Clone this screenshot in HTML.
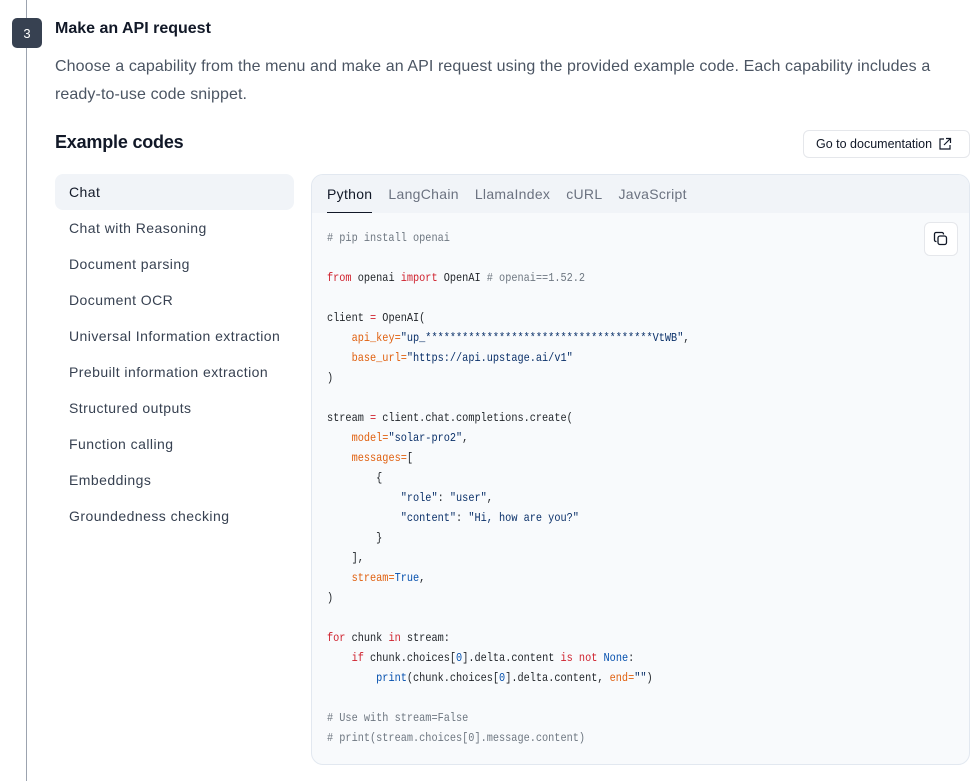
<!DOCTYPE html>
<html><head><meta charset="utf-8"><style>
*{box-sizing:border-box;margin:0;padding:0}
body{width:977px;height:781px;background:#fff;font-family:"Liberation Sans",sans-serif;position:relative;overflow:hidden;color:#111827}
.vl{position:absolute;left:26px;top:0;width:1px;height:781px;background:#9ca3af}
.badge{position:absolute;left:12px;top:18px;width:30px;height:30px;background:#374151;border-radius:5px;color:#fff;font-size:13px;display:flex;align-items:center;justify-content:center}
.t{position:absolute;left:55px;top:19px;font-size:16px;font-weight:bold;color:#111827;line-height:20px}
.p{position:absolute;left:55px;top:53px;width:910px;font-size:16px;line-height:28px;color:#4b5563;letter-spacing:0.1px}
.h{position:absolute;left:55px;top:131px;font-size:18px;font-weight:bold;color:#111827;line-height:22px;letter-spacing:-0.2px}
.btn{position:absolute;left:803px;top:130px;width:167px;height:28px;border:1px solid #e5e7eb;border-radius:6px;font-size:12.5px;color:#111827;display:flex;align-items:center;padding-left:12px;gap:6px}
.menu{position:absolute;left:55px;top:174px;width:239px}
.menu div{height:36px;line-height:36px;padding-left:14px;font-size:14px;color:#374151;letter-spacing:0.45px}
.menu div.a{background:#f1f4f8;border-radius:8px;color:#111827}
.card{position:absolute;left:311px;top:174px;width:659px;height:591px;border:1px solid #e2e8f0;border-radius:12px;background:#f8fafc;overflow:hidden}
.tabs{height:38px;background:#f1f4f8;display:flex;padding-left:15px;gap:16px;font-size:14px;color:#6b7280;letter-spacing:0.3px}
.tabs span{line-height:38px;height:38px}
.tabs span.a{color:#111827;border-bottom:1.5px solid #111827}
.copy{position:absolute;right:11px;top:47px;width:34px;height:34px;border:1px solid #e5e7eb;border-radius:6px;background:#fff;display:flex;align-items:center;justify-content:center}
pre{position:absolute;left:15px;top:53px;font-family:"Liberation Mono",monospace;font-size:12.2px;line-height:20px;color:#1f2328;transform:scaleX(0.84);transform-origin:0 0}
.c{color:#6e7781}.k{color:#cf222e}.o{color:#e0600f}.s{color:#0a3069}.b{color:#0550ae}
</style></head><body>
<div class="vl"></div>
<div class="badge">3</div>
<div class="t">Make an API request</div>
<div class="p">Choose a capability from the menu and make an API request using the provided example code. Each capability includes a ready-to-use code snippet.</div>
<div class="h">Example codes</div>
<div class="btn">Go to documentation <svg width="14" height="14" viewBox="0 0 14 14" fill="none" stroke="#111827" stroke-width="1.2"><path d="M6 2H2v10h10V8"/><path d="M8 1.5h4.5V6M12.5 1.5L6 8"/></svg></div>
<div class="menu">
<div class="a">Chat</div><div>Chat with Reasoning</div><div>Document parsing</div><div>Document OCR</div><div>Universal Information extraction</div><div>Prebuilt information extraction</div><div>Structured outputs</div><div>Function calling</div><div>Embeddings</div><div>Groundedness checking</div>
</div>
<div class="card">
<div class="tabs"><span class="a">Python</span><span>LangChain</span><span>LlamaIndex</span><span>cURL</span><span>JavaScript</span></div>
<div class="copy"><svg width="16" height="16" viewBox="0 0 16 16" fill="none" stroke="#111827" stroke-width="1.3"><rect x="5" y="5" width="8.5" height="8.5" rx="2"/><path d="M10.5 3.5V3a1.5 1.5 0 0 0-1.5-1.5H3A1.5 1.5 0 0 0 1.5 3v6A1.5 1.5 0 0 0 3 10.5h.5"/></svg></div>
<pre><span class="c"># pip install openai</span>

<span class="k">from</span> openai <span class="k">import</span> OpenAI <span class="c"># openai==1.52.2</span>

client <span class="k">=</span> OpenAI(
    <span class="o">api_key=</span><span class="s">"up_*************************************VtWB"</span>,
    <span class="o">base_url=</span><span class="s">"https://api.upstage.ai/v1"</span>
)

stream <span class="k">=</span> client.chat.completions.create(
    <span class="o">model=</span><span class="s">"solar-pro2"</span>,
    <span class="o">messages=</span>[
        {
            <span class="s">"role"</span>: <span class="s">"user"</span>,
            <span class="s">"content"</span>: <span class="s">"Hi, how are you?"</span>
        }
    ],
    <span class="o">stream=</span><span class="b">True</span>,
)

<span class="k">for</span> chunk <span class="k">in</span> stream:
    <span class="k">if</span> chunk.choices[<span class="b">0</span>].delta.content <span class="k">is not</span> <span class="b">None</span>:
        <span class="b">print</span>(chunk.choices[<span class="b">0</span>].delta.content, <span class="o">end=</span><span class="s">""</span>)

<span class="c"># Use with stream=False</span>
<span class="c"># print(stream.choices[0].message.content)</span></pre>
</div>
</body></html>
